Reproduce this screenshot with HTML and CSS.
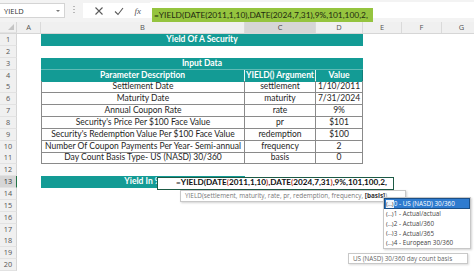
FILE: index.html
```html
<!DOCTYPE html>
<html>
<head>
<meta charset="utf-8">
<link rel="stylesheet" href="styles.css">
</head>
<body>
<div class="app">
  <div class="topbar">
    <div class="namebox"><span class="nb-text">YIELD</span><span class="caret"></span></div>
    <div class="grip"><i></i><i></i><i></i></div>
    <div class="fxbtns">
      <svg class="ico" width="10" height="10" viewBox="0 0 10 10"><path d="M1.5 1.5 L8.5 8.5 M8.5 1.5 L1.5 8.5" stroke="#5a5a5a" stroke-width="1.1" fill="none"/></svg>
      <svg class="ico" width="10" height="10" viewBox="0 0 10 10"><path d="M1 5.5 L4 8.5 L9 2" stroke="#5a5a5a" stroke-width="1.1" fill="none"/></svg>
      <span class="fx">fx</span>
    </div>
    <div class="formula"><span class="fhl">=YIELD(DATE(2011,1,10),DATE(2024,7,31),9%,101,100,2,</span></div>
  </div>

  <div class="sheet">
    <div class="row hdr">
      <div class="rn corner"><span class="tri"></span></div>
      <div class="ch">A</div><div class="ch">B</div><div class="ch sel">C</div><div class="ch">D</div><div class="ch">E</div><div class="ch">F</div><div class="ch">G</div>
    </div>
    <div class="row"><div class="rn">1</div><div></div><div class="teal span3 title">Yield Of A Security</div></div>
    <div class="row"><div class="rn">2</div></div>
    <div class="row"><div class="rn">3</div><div></div><div class="teal span3 title sec">Input Data</div></div>
    <div class="row"><div class="rn">4</div><div></div><div class="teal th">Parameter Description</div><div class="teal th">YIELD() Argument</div><div class="teal th last">Value</div></div>
    <div class="row"><div class="rn">5</div><div></div><div class="td first top">Settlement Date</div><div class="td top">settlement</div><div class="td top">1/10/2011</div></div>
    <div class="row"><div class="rn">6</div><div></div><div class="td first">Maturity Date</div><div class="td">maturity</div><div class="td">7/31/2024</div></div>
    <div class="row"><div class="rn">7</div><div></div><div class="td first">Annual Coupon Rate</div><div class="td">rate</div><div class="td">9%</div></div>
    <div class="row"><div class="rn">8</div><div></div><div class="td first">Security's Price Per $100 Face Value</div><div class="td">pr</div><div class="td">$101</div></div>
    <div class="row"><div class="rn">9</div><div></div><div class="td first">Security's Redemption Value Per $100 Face Value</div><div class="td">redemption</div><div class="td">$100</div></div>
    <div class="row"><div class="rn">10</div><div></div><div class="td first">Number Of Coupon Payments Per Year- Semi-annual</div><div class="td">frequency</div><div class="td">2</div></div>
    <div class="row"><div class="rn">11</div><div></div><div class="td first">Day Count Basis Type- US (NASD) 30/360</div><div class="td">basis</div><div class="td">0</div></div>
    <div class="row"><div class="rn">12</div></div>
    <div class="row"><div class="rn selrow">13</div><div></div><div class="teal title">Yield In %</div></div>
    <div class="row"><div class="rn">14</div></div>
    <div class="row"><div class="rn">15</div></div>
    <div class="row"><div class="rn">16</div></div>
    <div class="row"><div class="rn">17</div></div>
    <div class="row"><div class="rn">18</div></div>
    <div class="row"><div class="rn">19</div></div>
    <div class="row"><div class="rn">20</div></div>
  </div>

  <div class="editor">=YIELD(DATE<span class="p">(</span>2011,1,10<span class="p">)</span>,DATE<span class="p">(</span>2024,7,31<span class="p">)</span>,9%,101,100,2,</div>
  <div class="tip">YIELD(settlement, maturity, rate, pr, redemption, frequency, <b>[basis]</b>)</div>
  <div class="list">
    <div class="item on"><span class="cst">(…)</span><span class="lbl">0 - US (NASD) 30/360</span></div>
    <div class="item"><span class="cst">(…)</span><span class="lbl">1 - Actual/actual</span></div>
    <div class="item"><span class="cst">(…)</span><span class="lbl">2 - Actual/360</span></div>
    <div class="item"><span class="cst">(…)</span><span class="lbl">3 - Actual/365</span></div>
    <div class="item"><span class="cst">(…)</span><span class="lbl">4 - European 30/360</span></div>
  </div>
  <div class="hint">US (NASD) 30/360 day count basis</div>
</div>
</body>
</html>
```

FILE: styles.css
```css
* { box-sizing: border-box; }
html, body { margin: 0; padding: 0; background: #fff; }
.app {
  position: relative;
  width: 474px;
  height: 272px;
  overflow: hidden;
  font-family: Lato, "Liberation Sans", sans-serif;
  background: #fff;
}

/* ---------- formula bar ---------- */
.topbar {
  height: 23px;
  background: #f3f3f3;
  display: flex;
  align-items: flex-start;
  padding-top: 2px;
  border-bottom: 1px solid #dcdcdc;
}
.namebox {
  width: 65px;
  height: 15px;
  margin-top: 1px;
  background: #fff;
  border: 1px solid #d4d4d4;
  border-left: none;
  display: flex;
  align-items: center;
  justify-content: space-between;
  padding: 0 4px 0 4px;
  font-family: "Open Sans", sans-serif;
  font-size: 7.5px;
  color: #333;
}
.caret {
  width: 0; height: 0;
  border-left: 2px solid transparent;
  border-right: 2px solid transparent;
  border-top: 2px solid #777;
}
.grip {
  width: 18px;
  height: 15px;
  display: flex;
  flex-direction: column;
  align-items: center;
  justify-content: center;
  gap: 1.5px;
}
.grip i { width: 1.5px; height: 1.5px; background: #b8b8b8; display: block; }
.fxbtns {
  width: 67px;
  height: 15px;
  margin-top: 1px;
  display: flex;
  align-items: center;
  justify-content: space-around;
  background: #fff;
  padding: 0 4px 0 6px;
}
.ico { display: block; }
.fx {
  font-family: "Liberation Serif", serif;
  font-style: italic;
  font-size: 9px;
  color: #555;
}
.formula {
  flex: 1;
  height: 16px;
  background: #fff;
  padding-left: 2px;
}
.fhl {
  display: inline-block;
  height: 15px;
  width: 221px;
  line-height: 15px;
  background: #95c43f;
  color: #1f2a10;
  font-size: 8.4px;
  padding-left: 2px;
  white-space: nowrap;
}

/* ---------- sheet grid ---------- */
.sheet { display: flex; flex-direction: column; }
.row {
  display: grid;
  grid-template-columns: 17px 24px 204px 71px 47px 39px 40px 40px;
  height: 11.85px;
  font-size: 8.5px;
  line-height: 11px;
}
.row.hdr {
  height: 12px;
  background: #f0f0f0;
  border-bottom: 1px solid #d6d6d6;
  margin-top: -1px;
}
.ch {
  text-align: center;
  font-family: "Open Sans", sans-serif;
  font-size: 7.5px;
  line-height: 11px;
  color: #555;
  border-right: 1px solid #dadada;
}
.ch.sel { background: #d6d6d6; color: #444; }
.rn {
  background: #f0f0f0;
  border-right: 1px solid #d6d6d6;
  border-bottom: 1px solid #e2e2e2;
  text-align: center;
  font-family: "Open Sans", sans-serif;
  font-size: 7.3px;
  color: #555;
  line-height: 11px;
}
.rn.selrow { background: #d6d6d6; border-right: 1px solid #217346; color: #333; }
.corner { position: relative; }
.tri {
  position: absolute;
  right: 2px; bottom: 2px;
  width: 0; height: 0;
  border-left: 6px solid transparent;
  border-bottom: 6px solid #c4c4c4;
}

.teal {
  background: #139b95;
  color: #fff;
  font-weight: 700;
  text-align: center;
  white-space: nowrap;
  overflow: hidden;
}
.span3 { grid-column: span 3; }
.title { font-size: 8.5px; }
.sec { border-bottom: 1px solid #5fbab5; }
.th { border-right: 1px solid #e8f5f4; font-size: 8.5px; }
.th.last { border-right: 1px solid #0f7f7a; }
.td {
  text-align: center;
  color: #1e1e1e;
  white-space: nowrap;
  border-right: 1px solid #8a8a8a;
  border-bottom: 1px solid #8a8a8a;
}
.td.first { border-left: 1px solid #8a8a8a; }

/* ---------- overlays ---------- */
.editor {
  position: absolute;
  left: 157px;
  top: 177px;
  width: 237px;
  height: 12.5px;
  background: #fff;
  border: 1.5px solid #1d5a45;
  font-weight: 700;
  font-size: 8.2px;
  line-height: 9.5px;
  color: #111;
  text-align: center;
  white-space: nowrap;
  padding-left: 12px;
}
.editor .p { color: #c0392b; }
.tip {
  position: absolute;
  left: 180px;
  top: 190px;
  width: 226px;
  height: 12px;
  background: #fff;
  border: 1px solid #c8c8c8;
  box-shadow: 1px 1px 2px rgba(0,0,0,0.18);
  font-family: "Open Sans", sans-serif;
  font-size: 6.4px;
  line-height: 10px;
  color: #777;
  padding-left: 4px;
  white-space: nowrap;
}
.tip b { color: #333; }
.list {
  position: absolute;
  left: 383px;
  top: 197px;
  width: 88px;
  height: 52px;
  background: #fff;
  border: 1px solid #c8c8c8;
  box-shadow: 1px 1px 2px rgba(0,0,0,0.18);
  padding: 0 0 0 1px;
  display: flex;
  flex-direction: column;
  font-family: "Open Sans", sans-serif;
  font-size: 6.3px;
  color: #444;
}
.item {
  height: 9.7px;
  display: flex;
  align-items: center;
  white-space: nowrap;
  padding-left: 1px;
}
.item.on {
  height: 11px;
  margin: 0 0 0 -1px;
  padding-left: 1px;
  border: 1px solid #1b4f86;
  background: #2e7bcf;
}
.item.on .cst { background: #eef4fb; color: #333; }
.item.on .lbl { color: #fff; }
.cst {
  font-size: 6px;
  color: #333;
  letter-spacing: -0.3px;
  padding-right: 0.5px;
}
.hint {
  position: absolute;
  left: 348px;
  top: 253px;
  width: 120px;
  height: 11px;
  background: #fff;
  border: 1px solid #c8c8c8;
  box-shadow: 1px 1px 2px rgba(0,0,0,0.15);
  font-family: "Open Sans", sans-serif;
  font-size: 6.3px;
  line-height: 9px;
  color: #666;
  padding-left: 4px;
  white-space: nowrap;
}
```
